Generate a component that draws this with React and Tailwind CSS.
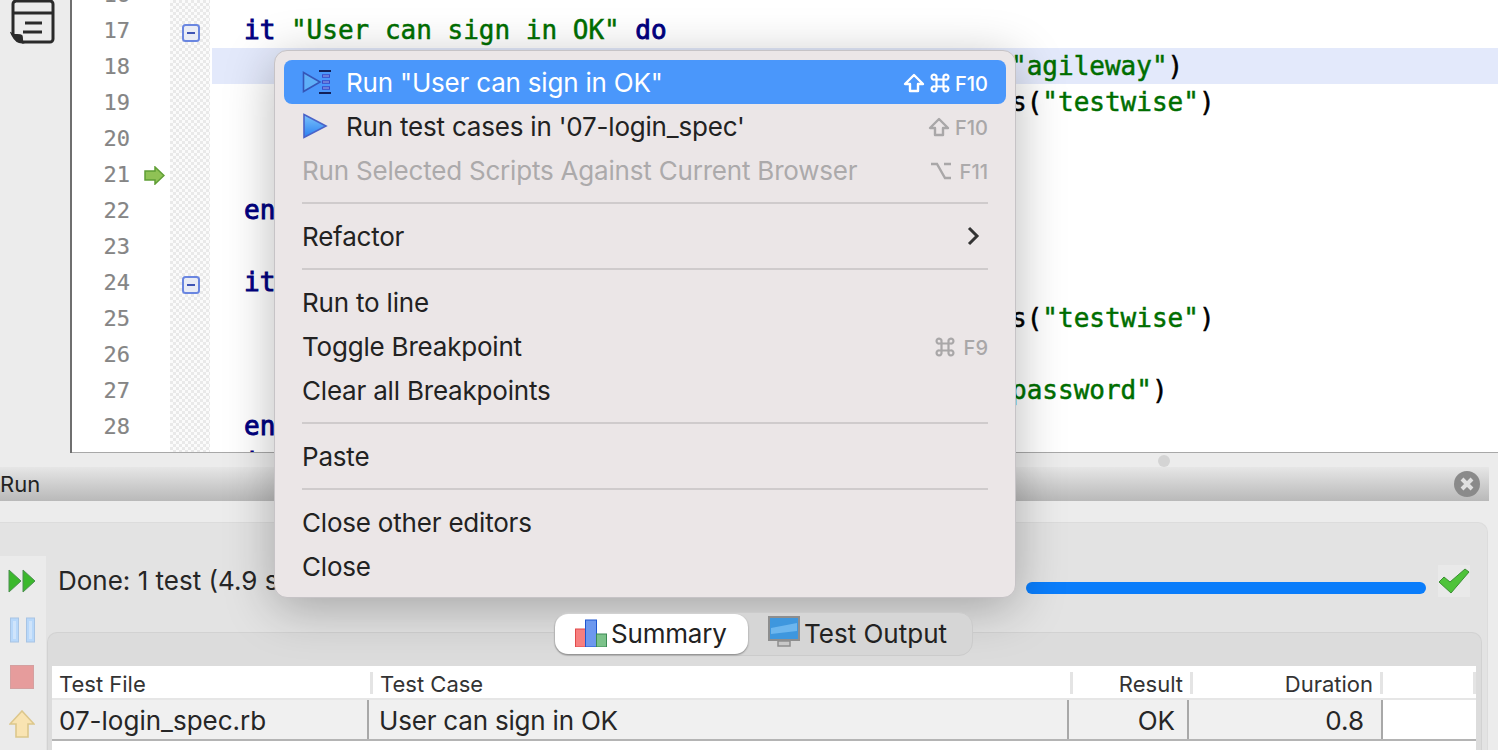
const pad = (n) => " ".repeat(n);

// one entry per editor line; code is positioned with leading spaces because the menu hides the rest
const LINES = [
  { n: 16 },
  { n: 17, fold: true, kw: "it", str: ' "User can sign in OK"', end: " do" },
  { n: 18, hl: true, str: pad(49) + '"agileway"', tail: ")" },
  { n: 19, tailFirst: pad(49) + "s(", str: '"testwise"', tail: ")" },
  { n: 20 },
  { n: 21, arrow: true },
  { n: 22, kw: "end" },
  { n: 23 },
  { n: 24, fold: true, kw: "it" },
  { n: 25, tailFirst: pad(49) + "s(", str: '"testwise"', tail: ")" },
  { n: 26 },
  { n: 27, str: pad(49) + 'password"', tail: ")" },
  { n: 28, kw: "end" },
  { n: 29, kw: "i" },
];

function FoldBox() {
  return (
    <svg className="mt-[6px] ml-[2px]" width="18" height="18" viewBox="0 0 18 18">
      <rect x="1" y="1" width="16" height="16" rx="2.500" fill="#e9ecf5" stroke="#6a86e0" strokeWidth="2" />
      <path d="M5 9h8" stroke="#3f55b5" strokeWidth="2" />
    </svg>
  );
}

function GreenArrow() {
  return (
    <svg className="mt-[2px]" width="21" height="19" viewBox="0 0 21 19">
      <path d="M1 5h10V1l9 8.500-9 8.500v-4H1z" fill="#8fc255" stroke="#5f9e35" strokeWidth="1.500" />
    </svg>
  );
}

function NoteIcon() {
  return (
    <svg width="46" height="46" viewBox="0 0 46 46" fill="none" stroke="#2a2a2a" strokeWidth="3">
      <path d="M5 2h35a3 3 0 0 1 3 3v35a3 3 0 0 1-3 3H12" />
      <path d="M3 36V5a3 3 0 0 1 3-3" />
      <path d="M3 14h40" />
      <path d="M3 36c2 1 7 0 8 1 1 2 0 4 1 6-4 0-7-3-9-7z" fill="#2a2a2a" />
      <path d="M15 24h17M13 33h19" />
    </svg>
  );
}

function PlayIcon() {
  return (
    <svg width="26" height="26" viewBox="0 0 26 26">
      <defs>
        <linearGradient id="play" x1="0" y1="0" x2="0" y2="1">
          <stop offset="0" stopColor="#7cc4fb" />
          <stop offset="1" stopColor="#2a7ff0" />
        </linearGradient>
      </defs>
      <path d="M2 1.500 24 13 2 24.500z" fill="url(#play)" stroke="#4a63c8" strokeWidth="1.600" />
    </svg>
  );
}

function PlayLinesIcon() {
  return (
    <svg width="30" height="24" viewBox="0 0 30 24">
      <path d="M1.500 2.500 18 12 1.500 21.500z" fill="#5fb0f8" stroke="#3556b8" strokeWidth="1.600" />
      <path d="M17 1h12M17 23h12" stroke="#12205a" strokeWidth="2" />
      <path d="M20 6h8M20 12h8M20 18h8" stroke="#3a49c8" strokeWidth="3.500" />
      <path d="M21 6h6M21 12h6M21 18h6" stroke="#9db4ee" strokeWidth="1" />
    </svg>
  );
}

const Shift = ({ c }) => (
  <svg className="mt-[1px]" width="22" height="20" viewBox="0 0 22 20" fill="none" stroke={c} strokeWidth="2.400" strokeLinejoin="round">
    <path d="M11 2 2 11h5v7h8v-7h5z" />
  </svg>
);
const Cmd = ({ c }) => (
  <svg className="mt-[1px]" width="20" height="20" viewBox="0 0 20 20" fill="none" stroke={c} strokeWidth="2.200">
    <path d="M6.500 6.500h7v7h-7zM6.500 6.500H4.500a2.500 2.500 0 1 1 2-2zM13.500 6.500V4.500a2.500 2.500 0 1 1 2 2zM13.500 13.500h2a2.500 2.500 0 1 1-2 2zM6.500 13.500v2a2.500 2.500 0 1 1-2-2z" />
  </svg>
);
const Opt = ({ c }) => (
  <svg className="mt-[1px]" width="22" height="18" viewBox="0 0 22 18" fill="none" stroke={c} strokeWidth="2.400">
    <path d="M1 2h6l8 14h6M14 2h7" />
  </svg>
);

function Sep() {
  return (
    <div className="h-[22px] flex items-center px-[18px]">
      <div className="w-full h-[2px] bg-[#cfcbcc]" />
    </div>
  );
}

function MenuItem({ label, icon, keys, active, disabled, arrow }) {
  const text = active ? "text-white" : disabled ? "text-[#acaaab]" : "text-[#222]";
  return (
    <div className={`h-[44px] flex items-center rounded-lg pl-[18px] pr-[18px] ${active ? "bg-[#4a97fb]" : ""} ${text}`}>
      {icon && <span className="w-[44px] flex items-center shrink-0">{icon}</span>}
      <span className="text-[26px] tracking-[-0.2px] whitespace-pre leading-none mt-[2px]">{label}</span>
      {keys && <span className="ml-auto flex items-center gap-[5px] text-[20px] font-medium leading-none">{keys}</span>}
      {arrow && (
        <svg className="ml-auto mr-[8px]" width="14" height="20" viewBox="0 0 14 20" fill="none" stroke="#333" strokeWidth="3">
          <path d="m3 2 8 8-8 8" />
        </svg>
      )}
    </div>
  );
}

function ContextMenu() {
  const gray = "#a9a7a8";
  return (
    <div className="absolute left-[274px] top-[50px] w-[742px] h-[548px] p-[9px] rounded-[13px] bg-[#ebe6e7] border border-[#c6c3c6] shadow-[0_10px_50px_rgba(0,0,0,0.28)]">
      <MenuItem
        active
        label={'Run "User can sign in OK"'}
        icon={<PlayLinesIcon />}
        keys={<><Shift c="#fff" /><Cmd c="#fff" /><span className="mt-[4px]">F10</span></>}
      />
      <MenuItem
        label="Run test cases in '07-login_spec'"
        icon={<PlayIcon />}
        keys={<><Shift c={gray} /><span className="mt-[4px] text-[#a9a7a8]">F10</span></>}
      />
      <MenuItem
        disabled
        label="Run Selected Scripts Against Current Browser"
        keys={<><Opt c={gray} /><span className="mt-[4px] ml-[3px]">F11</span></>}
      />
      <Sep />
      <MenuItem label="Refactor" arrow />
      <Sep />
      <MenuItem label="Run to line" />
      <MenuItem label="Toggle Breakpoint" keys={<><Cmd c={gray} /><span className="mt-[4px] ml-[4px] text-[#a9a7a8]">F9</span></>} />
      <MenuItem label="Clear all Breakpoints" />
      <Sep />
      <MenuItem label="Paste" />
      <Sep />
      <MenuItem label="Close other editors" />
      <MenuItem label="Close" />
    </div>
  );
}

function Editor() {
  return (
    <div className="flex h-[453px] shrink-0">
      <div className="w-[70px] shrink-0 bg-[#ececec] pl-[10px]">
        <div className="-mt-[1px]">
          <NoteIcon />
        </div>
      </div>
      <div className="w-[2px] bg-[#6f6f6f] shrink-0" />
      <div className="flex-1 bg-white border-b border-[#a8a8a8] overflow-hidden font-['DejaVu_Sans_Mono',monospace]">
        <div className="-mt-[24px]">
          {LINES.map((l) => (
            <div key={l.n} className="h-[36px] flex items-center">
              <div className="w-[72px] text-right pr-[14px] text-[#858585] text-[22px] shrink-0 [-webkit-text-stroke:0.2px]">{l.n}</div>
              <div className="w-[26px] shrink-0 flex items-center">{l.arrow && <GreenArrow />}</div>
              <div className="w-[40px] h-[36px] shrink-0 flex items-center justify-center bg-[repeating-conic-gradient(#e9e9e9_0_25%,#fbfbfb_0_50%)] bg-[length:6px_6px]">
                {l.fold && <FoldBox />}
              </div>
              <div className={`flex-1 h-[36px] pl-[32px] ml-[2px] text-[26px] leading-[36px] whitespace-pre [-webkit-text-stroke:0.5px] ${l.hl ? "bg-[#e3e9fb]" : ""}`}>
                {l.kw && <span className="text-[#000080] [-webkit-text-stroke:0.9px]">{l.kw}</span>}
                {l.tailFirst && <span className="text-black">{l.tailFirst}</span>}
                {l.str && <span className="text-[#006e00]">{l.str}</span>}
                {l.end && <span className="text-[#000080] [-webkit-text-stroke:0.9px]">{l.end}</span>}
                {l.tail && <span className="text-black">{l.tail}</span>}
              </div>
            </div>
          ))}
        </div>
      </div>
    </div>
  );
}

function SideButtons() {
  return (
    <div className="w-[46px] shrink-0 bg-[#ebebeb] flex flex-col items-center pt-[13px] pr-[2px]">
      <svg width="28" height="24" viewBox="0 0 28 24">
        <path d="M1 1 13 12 1 23zM15 1 27 12 15 23z" fill="#3bb82c" stroke="#4c8f50" strokeWidth="1" />
      </svg>
      <svg className="mt-[24px]" width="26" height="26" viewBox="0 0 26 26">
        <rect x="1.500" y="1" width="8" height="24" fill="#b8d8fa" stroke="#a8c4e4" />
        <rect x="17.500" y="1" width="8" height="24" fill="#b8d8fa" stroke="#a8c4e4" />
        <path d="M5.500 4v18M21.500 4v18" stroke="#cfe4fb" strokeWidth="3" />
      </svg>
      <div className="w-[24px] h-[24px] mt-[22px] bg-[#e69c9c] border border-[#d4a0a0]" />
      <svg className="mt-[21px]" width="26" height="28" viewBox="0 0 26 28">
        <path d="M13 1 1 14h6v13h12V14h6z" fill="#f9e4b2" stroke="#dcc78c" strokeWidth="1.600" />
      </svg>
    </div>
  );
}

function RunStatus() {
  return (
    <div className="h-[50px] flex items-center pl-[12px] pr-[17px] mb-[6px]">
      <span className="text-[26px] text-[#262626] leading-none">Done: 1 test (4.9 s)</span>
      <div className="ml-auto w-[400px] h-[12px] mt-[14px] rounded-full bg-[#0a7dfb]" />
      <div className="ml-[12px] w-[32px] h-[32px] bg-[#e9e9e9] flex items-center justify-center">
        <svg width="32" height="26" viewBox="0 0 32 26">
          <path d="M1 14 6 9l6 5L27 1l4 3-18 21z" fill="#4fc33a" stroke="#3b8f33" strokeWidth="1" />
        </svg>
      </div>
    </div>
  );
}

function SummaryTabs() {
  return (
    <div className="h-[44px] -mb-[24px] relative z-10 flex justify-center">
      <div className="-ml-[6px] flex items-center h-[44px] w-[419px] rounded-[14px] bg-[#d6d6d6] border border-[#cbcbcb]">
        <div className="w-[193px] h-[40px] rounded-[13px] bg-white shadow-[0_1px_2px_rgba(0,0,0,0.4)] flex items-center pl-[20px] text-[26px] text-[#222]">
          <svg width="32" height="28" viewBox="0 0 32 28" className="shrink-0 mr-[4px] -mt-[3px]">
            <rect x="0.500" y="10" width="10" height="18" fill="#f77f7f" stroke="#e04a4a" />
            <rect x="10.500" y="1" width="11" height="27" fill="#6d98ee" stroke="#1f56d0" />
            <rect x="21.500" y="15" width="10" height="13" fill="#7cc28a" stroke="#3d8a55" />
          </svg>
          <span className="tracking-[-0.2px] -mt-[2px]">Summary</span>
        </div>
        <div className="flex items-center pl-[20px] text-[26px] text-[#222]">
          <svg width="32" height="31" viewBox="0 0 32 31" className="shrink-0 mr-[4px] -mt-[5px]">
            <rect x="1" y="1" width="30" height="23" fill="#3e97de" stroke="#8e8e8e" strokeWidth="2" />
            <path d="M3 12 29 7v8L3 18z" fill="#6cb6ee" />
            <path d="M10 25h12v5H10z" fill="#c8c8c8" stroke="#8e8e8e" strokeWidth="1.500" />
          </svg>
          <span className="-mt-[2px]">Test Output</span>
        </div>
      </div>
    </div>
  );
}

function ResultsTable() {
  const heads = [
    { t: "Test File", cls: "pl-[7px]" },
    { t: "Test Case", cls: "pl-[7px]" },
    { t: "Result", cls: "text-right pr-[7px]" },
    { t: "Duration", cls: "text-right pr-[7px]" },
    { t: "", cls: "" },
  ];
  const cells = [
    { t: "07-login_spec.rb", cls: "pl-[7px]" },
    { t: "User can sign in OK", cls: "pl-[10px] tracking-[-0.2px]" },
    { t: "OK", cls: "text-right pr-[12px]" },
    { t: "0.8", cls: "text-right pr-[17px]" },
  ];
  return (
    <div className="flex-1 ml-[4px] mr-[5px] mt-[33px] bg-white">
      <div className="grid grid-cols-[321px_700px_120px_190px_93px] h-[34px] border-b-2 border-[#e6e6e6] items-center text-[22px] text-[#333]">
        {heads.map((h, i) => (
          <div key={i} className={`h-[22px] mt-[2px] leading-[24px] border-r-[3px] border-[#e4e4e4] ${h.cls}`}>{h.t}</div>
        ))}
      </div>
      <div className="grid grid-cols-[317px_700px_120px_194px] h-[41px] border-b-2 border-[#b4b4b4] text-[26px] text-[#262626] leading-[37px]">
        {cells.map((c, i) => (
          <div key={i} className={`bg-[#f0f0f0] pt-[2px] border-r-2 border-[#a8a8a8] ${c.cls}`}>{c.t}</div>
        ))}
      </div>
    </div>
  );
}

function RunPanel() {
  return (
    <div className="flex-1 flex flex-col min-h-0">
      <div className="h-[14px] shrink-0 flex justify-center">
        <div className="ml-[830px] mt-[2px] w-[12px] h-[12px] rounded-full bg-[#d4d4d4]" />
      </div>
      <div className="h-[34px] shrink-0 mr-[9px] bg-gradient-to-b from-[#e6e6e6] to-[#b9b9b9] flex items-center justify-between text-[22px] text-[#222] pr-[9px]">
        <span>Run</span>
        <svg width="26" height="26" viewBox="0 0 26 26">
          <circle cx="13" cy="13" r="13" fill="#8a8a8a" />
          <path d="m8 8 10 10M18 8 8 18" stroke="#e0e0e0" strokeWidth="4" />
        </svg>
      </div>
      <div className="flex-1 pt-[21px] pr-[10px] min-h-0">
        <div className="h-full bg-[#e3e3e3] rounded-tr-[10px] border-t border-r border-[#dcdcdc] pt-[33px] flex">
          <SideButtons />
          <div className="flex-1 min-w-0 flex flex-col">
            <RunStatus />
            <SummaryTabs />
            <div className="flex-1 ml-[1px] mr-[5px] bg-[#dcdcdc] rounded-t-[10px] border-t border-r border-l border-[#d2d2d2] flex flex-col">
              <ResultsTable />
            </div>
          </div>
        </div>
      </div>
    </div>
  );
}

export default function App() {
  return (
    <div className="relative w-[1498px] h-[750px] overflow-hidden bg-[#ececec] flex flex-col font-['Inter',sans-serif]">
      <Editor />
      <RunPanel />
      <ContextMenu />
    </div>
  );
}
